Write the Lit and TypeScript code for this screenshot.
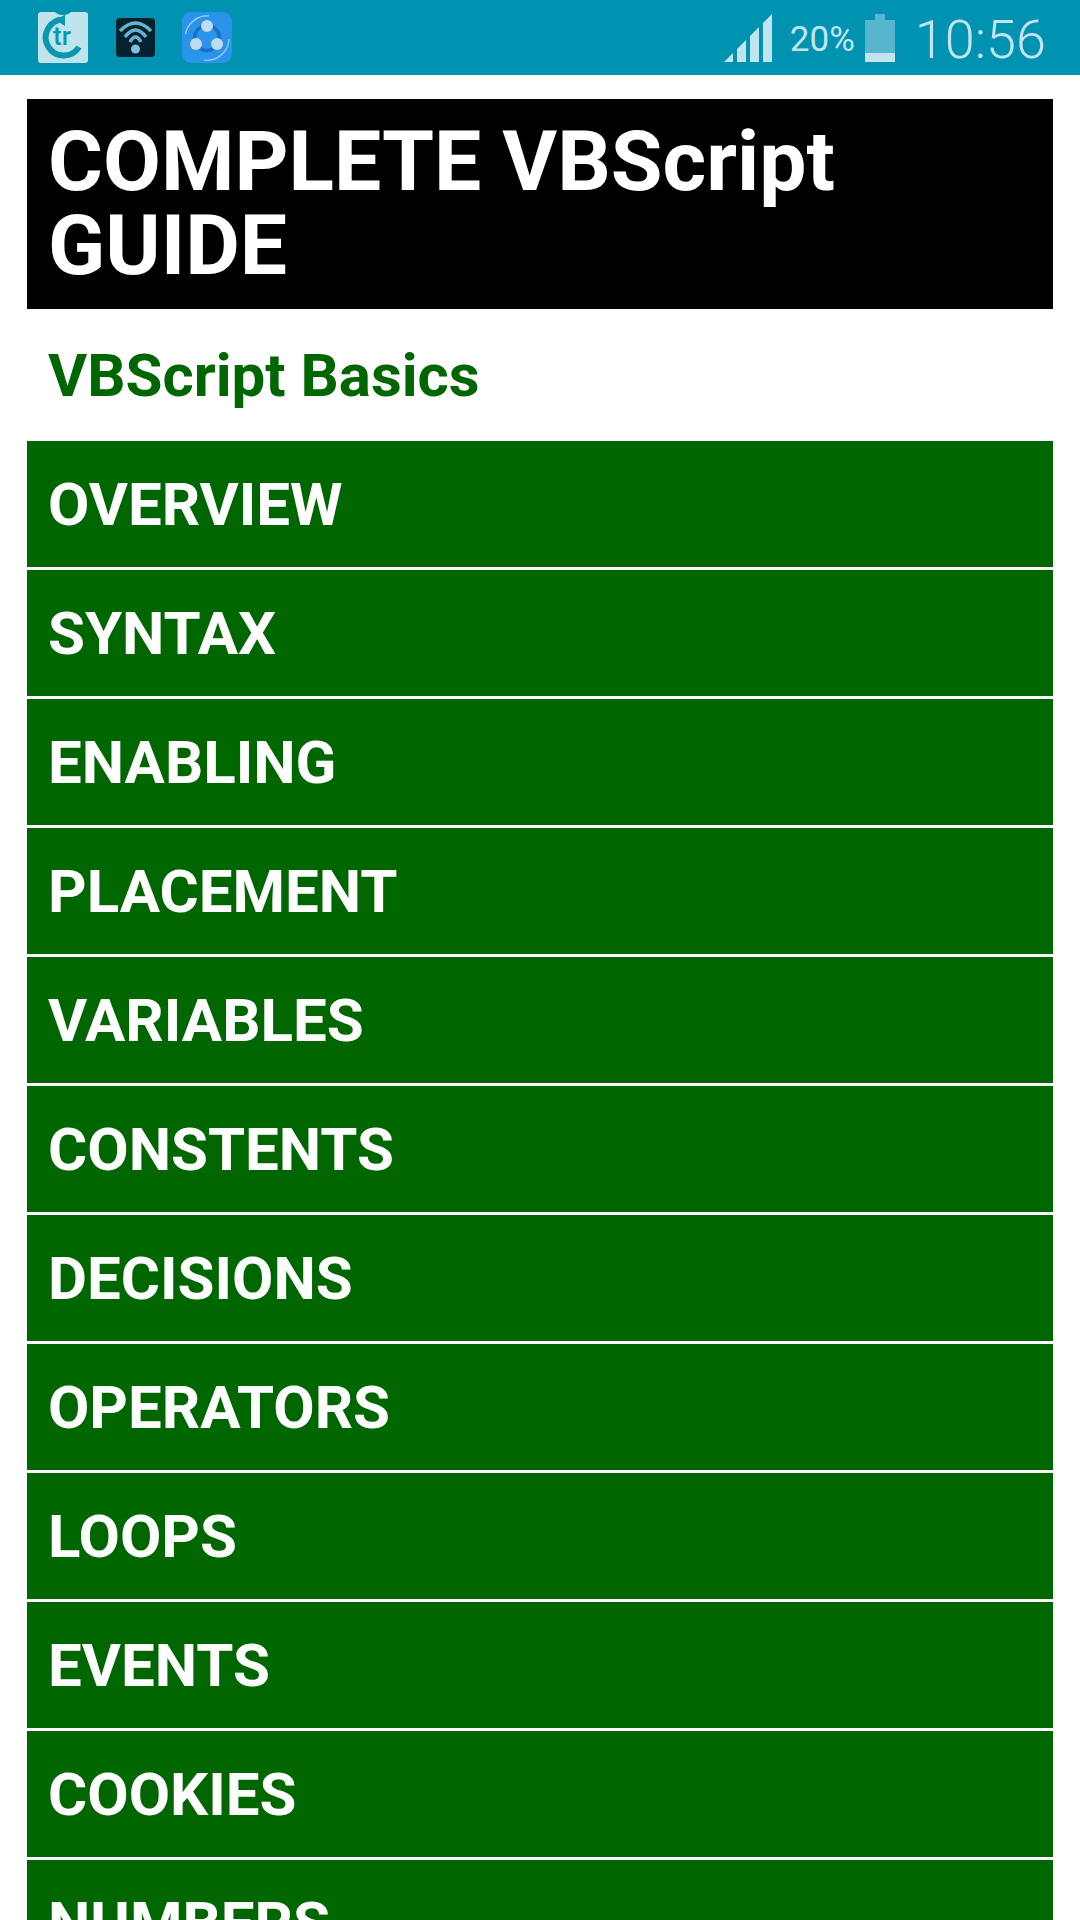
import { LitElement, html, css, svg } from 'lit';
import { customElement } from 'lit/decorators.js';

const TOPICS = [
  'OVERVIEW', 'SYNTAX', 'ENABLING', 'PLACEMENT', 'VARIABLES', 'CONSTENTS',
  'DECISIONS', 'OPERATORS', 'LOOPS', 'EVENTS', 'COOKIES', 'NUMBERS',
];

const trIcon = svg`<svg width="50" height="51" viewBox="0 0 50 51">
  <path d="M3 0H17Q20 3 25 3Q30 3 33 0H47Q50 0 50 3V48Q50 51 47 51H3Q0 51 0 48V3Q0 0 3 0Z" fill="#c0e4ec"/>
  <path d="M25 7.5A18 18 0 1 0 41 35" fill="none" stroke="#0c97b1" stroke-width="6"/>
  <path d="M27 2L19 9L27 14Z" fill="#0c97b1"/>
  <text x="15" y="33" class="tr-text">tr</text>
</svg>`;

const wifiIcon = svg`<svg class="wifi" width="39" height="39" viewBox="0 0 39 39">
  <rect width="39" height="39" rx="4" fill="#04222f"/>
  <g fill="none" stroke="#6ab0cf" stroke-width="3.6">
    <path d="M4 13Q19.5 -3 35 13"/>
    <path d="M9 19Q19.5 5 30 19"/>
    <path d="M14 24Q19.5 14 25 24"/>
  </g>
  <circle cx="19.5" cy="31" r="4.5" fill="#7cc0e0"/>
</svg>`;

const shareIcon = svg`<svg width="50" height="51" viewBox="0 0 50 51">
  <rect width="50" height="51" rx="9" fill="#2a93ea"/>
  <path d="M3.5 22A22 22 0 0 1 27 4" fill="none" stroke="#a8d6f8" stroke-width="1.2"/>
  <path d="M47 27A22 22 0 0 1 22 48" fill="none" stroke="#a8d6f8" stroke-width="1.2"/>
  <circle cx="25" cy="26" r="12.5" fill="none" stroke="#1a6fc9" stroke-width="3.5"/>
  <circle cx="25" cy="14" r="6" fill="#c0dcf2"/>
  <circle cx="14" cy="32" r="6" fill="#c0dcf2"/>
  <circle cx="35" cy="32" r="6" fill="#c0dcf2"/>
</svg>`;

const signalIcon = svg`<svg width="48" height="48" viewBox="0 0 48 48" fill="#c2e4ee">
  <path d="M0 48L9 39V48Z"/>
  <path d="M13 48V35L22 26V48Z"/>
  <path d="M26 48V22L35 13V48Z"/>
  <path d="M39 48V9L48 0V48Z"/>
</svg>`;

const batteryIcon = svg`<svg width="30" height="48" viewBox="0 0 30 48">
  <path d="M10 0H20V6H30V48H0V6H10Z" fill="#59b5cd"/>
  <rect y="39" width="30" height="9" fill="#c2e4ee"/>
</svg>`;

@customElement('app-root')
export class AppRoot extends LitElement {
  static styles = css`
    :host {
      display: block;
      width: 1080px;
      height: 1920px;
      overflow: hidden;
      background: #fff;
      font-family: Roboto, sans-serif;
    }
    .status {
      height: 75px;
      box-sizing: border-box;
      background: #0093b1;
      color: #c2e4ee;
      display: flex;
      align-items: center;
      padding: 0 34px 0 38px;
    }
    .status svg { display: block; flex: none; }
    .notifs { display: flex; align-items: center; }
    .wifi { margin: 0 27px 0 28px; }
    .right { margin-left: auto; display: flex; align-items: center; }
    .pct { font-size: 35px; margin: 4px 10px 0 18px; }
    .clock { font-size: 54px; font-weight: 300; margin: 4px 0 0 20px; }
    .tr-text { font: 500 26px Roboto, sans-serif; fill: #0c97b1; }
    main { padding: 24px 27px 0; }
    h1 {
      margin: 0;
      background: #000;
      color: #fff;
      font-size: 84px;
      line-height: 84px;
      font-weight: 700;
      padding: 21px;
    }
    h2 {
      margin: 0;
      height: 132px;
      box-sizing: border-box;
      padding: 0 21px;
      display: flex;
      align-items: center;
      color: #006600;
      font-size: 60px;
      font-weight: 700;
    }
    .list { display: flex; flex-direction: column; gap: 3px; }
    .row {
      height: 126px;
      flex: none;
      box-sizing: border-box;
      padding: 0 21px;
      display: flex;
      align-items: center;
      background: #006600;
      color: #fff;
      font-size: 60px;
      font-weight: 700;
    }
  `;

  render() {
    return html`
      <div class="status">
        <div class="notifs">${trIcon}${wifiIcon}${shareIcon}</div>
        <div class="right">
          ${signalIcon}
          <span class="pct">20%</span>
          ${batteryIcon}
          <span class="clock">10:56</span>
        </div>
      </div>
      <main>
        <h1>COMPLETE VBScript GUIDE</h1>
        <h2>VBScript Basics</h2>
        <div class="list">
          ${TOPICS.map(t => html`<div class="row">${t}</div>`)}
        </div>
      </main>
    `;
  }
}
